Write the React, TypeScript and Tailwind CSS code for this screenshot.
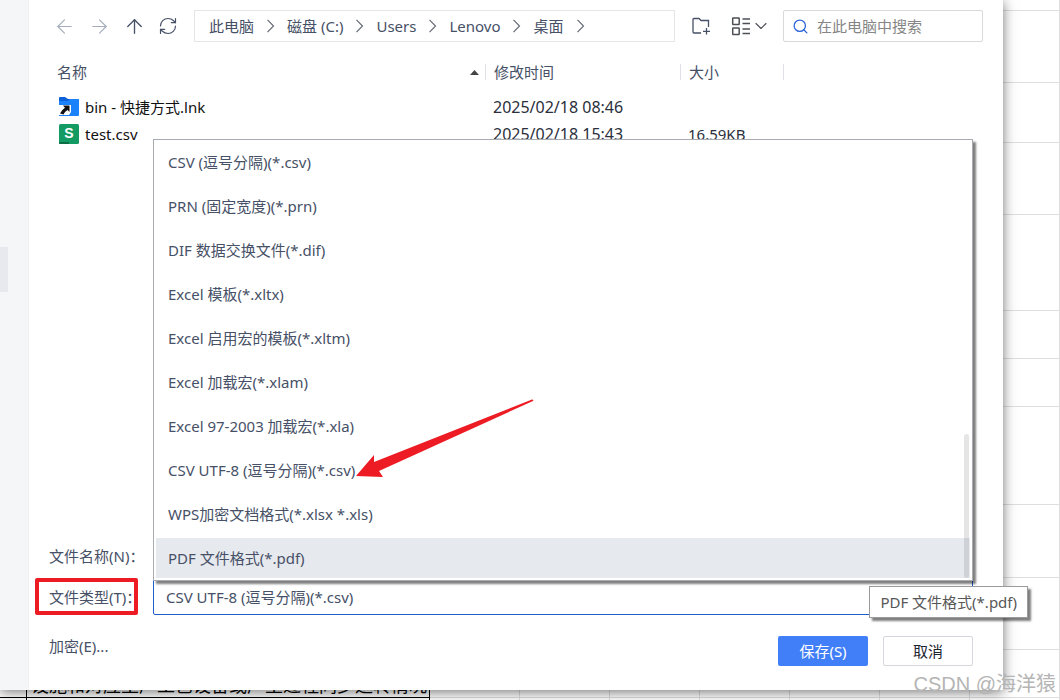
import React, { useState } from 'react'
import { ArrowLeft, ArrowRight, ArrowUp, ChevronDown, RefreshCw, Search } from 'lucide-react'

const fileTypes = [
  'CSV (逗号分隔)(*.csv)',
  'PRN (固定宽度)(*.prn)',
  'DIF 数据交换文件(*.dif)',
  'Excel 模板(*.xltx)',
  'Excel 启用宏的模板(*.xltm)',
  'Excel 加载宏(*.xlam)',
  'Excel 97-2003 加载宏(*.xla)',
  'CSV UTF-8 (逗号分隔)(*.csv)',
  'WPS加密文档格式(*.xlsx *.xls)',
  'PDF 文件格式(*.pdf)',
]

const crumbs = ['此电脑', '磁盘 (C:)', 'Users', 'Lenovo', '桌面']

export default function App() {
  const [hovered, setHovered] = useState('PDF 文件格式(*.pdf)')

  return (
    <div className="flex min-h-screen flex-col overflow-hidden bg-white font-['Noto_Sans','Noto_Sans_CJK_SC',sans-serif] text-[15px] leading-5 text-[#465066]">
      <div className="flex flex-1">
        <div className="relative z-10 flex min-w-0 flex-1 bg-white shadow-[0_2px_12px_rgba(0,0,0,0.55)]">
          <Sidebar />
          <main className="flex min-w-0 flex-1 flex-col">
            <Toolbar />
            <FileTable />
            <SaveForm hovered={hovered} setHovered={setHovered} />
          </main>
        </div>
        <SheetRows />
      </div>
      <SheetFooter />
    </div>
  )
}

const Sidebar = () => {
  return (
    <aside className="w-[29px] shrink-0 border-r border-[#f0f1f3] bg-[#f5f6f8] pt-[247px]">
      <div className="h-[45px] w-2 bg-[#e7e9ee]"></div>
    </aside>
  )
}

const Toolbar = () => {
  return (
    <div className="flex items-center pt-[10px] pr-5 pl-6">
      <div className="flex items-center gap-3">
        <button aria-label="后退" className="text-[#a5adbd]">
          <ArrowLeft size={23} strokeWidth={1.2} />
        </button>
        <button aria-label="前进" className="text-[#a5adbd]">
          <ArrowRight size={23} strokeWidth={1.2} />
        </button>
        <button aria-label="上移">
          <ArrowUp size={23} strokeWidth={1.4} />
        </button>
        <button aria-label="刷新">
          <RefreshCw size={20} strokeWidth={1.4} />
        </button>
      </div>
      <nav className="ml-4 flex h-8 min-w-0 flex-1 items-center border border-[#e6e6e8] pl-[14px]">
        {crumbs.map((c) => (
          <div key={c} className="flex items-center whitespace-nowrap">
            <a href="#">{c}</a>
            <CrumbArrow />
          </div>
        ))}
      </nav>
      <button aria-label="新建文件夹" className="ml-4">
        <NewFolderIcon />
      </button>
      <button aria-label="视图" className="ml-5 flex items-center text-[#4d4f55]">
        <ViewIcon />
        <ChevronDown size={20} strokeWidth={1.3} />
      </button>
      <label className="ml-3 flex h-8 w-[200px] items-center gap-2 rounded-[2px] border border-[#d9d9dc] pl-2">
        <Search size={17} strokeWidth={1.8} className="shrink-0 text-[#2a62d9]" />
        <input
          aria-label="搜索"
          placeholder="在此电脑中搜索"
          className="w-full min-w-0 outline-none placeholder:text-[#858585]"
        />
      </label>
    </div>
  )
}

const FileTable = () => {
  return (
    <table className="mt-5 ml-6 w-[750px] table-fixed border-collapse text-left">
      <thead>
        <tr className="h-5">
          <th className="w-[432px] pl-1 font-normal">
            <div className="flex items-center justify-between pr-[6px]">
              名称
              <svg width="9" height="5" viewBox="0 0 9 5" fill="#444">
                <path d="M4.5 0 9 5H0Z" />
              </svg>
            </div>
          </th>
          <HeadCell name="修改时间" cname="w-[195px]" />
          <HeadCell name="大小" cname="w-[103px]" />
          <HeadCell name="" cname="w-5" />
        </tr>
      </thead>
      <tbody className="text-[#111]">
        <tr>
          <td className="pt-[11px] pl-[6px]">
            <div className="flex h-[27px] items-center gap-[6px]">
              <LinkFolderIcon />
              bin - 快捷方式.lnk
            </div>
          </td>
          <td className="pt-[11px] pl-2 text-base text-[#2a2f3b]">2025/02/18 08:46</td>
          <td></td>
          <td></td>
        </tr>
        <tr>
          <td className="pl-[6px]">
            <div className="flex h-[27px] items-center gap-[6px]">
              <SheetIcon />
              test.csv
            </div>
          </td>
          <td className="pl-2 text-base text-[#2a2f3b]">2025/02/18 15:43</td>
          <td className="pl-2 text-[#2a2f3b]">16.59KB</td>
          <td></td>
        </tr>
      </tbody>
    </table>
  )
}

const HeadCell = ({ name, cname }: any) => {
  return (
    <th className={`font-normal ${cname}`}>
      <div className="flex items-center gap-2">
        <span className="h-4 w-px bg-[#dfe1e6]"></span>
        {name}
      </div>
    </th>
  )
}

const SaveForm = ({ hovered, setHovered }: any) => {
  return (
    <form className="mt-auto pr-[30px] pl-[6px]" onSubmit={(e) => e.preventDefault()}>
      <div className="flex h-[38px] items-center">
        <label htmlFor="fileName" className="w-[118px] shrink-0 pl-[14px]">文件名称(N)：</label>
        <input id="fileName" className="h-8 min-w-0 flex-1 border border-[#d9dbe0] px-3 outline-none" />
      </div>
      <div className="relative flex items-center pt-[3px]">
        <label
          htmlFor="fileType"
          className="mr-[15px] flex h-[37px] w-[103px] shrink-0 items-center rounded-[2px] border-4 border-[#ed1c24] pl-[10px] whitespace-nowrap"
        >
          文件类型(T)：
        </label>
        <select
          id="fileType"
          className="h-9 min-w-0 flex-1 appearance-none rounded-[2px] border border-[#1f5fcb] bg-white px-3 outline-none"
        >
          <option>CSV UTF-8 (逗号分隔)(*.csv)</option>
        </select>
        <FileTypeList hovered={hovered} setHovered={setHovered} />
        <div className="absolute top-[11px] -right-[55px] z-20 flex h-8 items-center border border-[#9b9b9b] bg-white px-[10px] whitespace-nowrap text-[#575757] shadow-[3px_3px_2px_rgba(0,0,0,0.5)]">
          {hovered}
        </div>
      </div>
      <div className="flex h-[75px] items-start gap-[15px] pt-[21px]">
        <a href="#" className="mr-auto pl-[14px]">加密(E)...</a>
        <button type="submit" className="h-[30px] w-[90px] rounded-[2px] bg-[#417ff9] text-white">保存(S)</button>
        <button type="button" className="h-[30px] w-[90px] rounded-[2px] border border-[#d5d7dc] text-[#1e2430]">取消</button>
      </div>
    </form>
  )
}

const FileTypeList = ({ hovered, setHovered }: any) => {
  return (
    <div className="absolute right-0 bottom-[34px] left-[118px] z-10 border border-[#a9abb3] bg-white p-[2px] shadow-[3px_3px_2px_rgba(0,0,0,0.5)]">
      <ul className="flex flex-col gap-1">
        {fileTypes.map((t) => (
          <li
            key={t}
            onMouseEnter={() => setHovered(t)}
            className={`flex h-10 items-center pl-3 ${hovered === t ? 'bg-[#e6e9ee]' : ''}`}
          >
            {t}
          </li>
        ))}
      </ul>
      <div className="absolute right-[3px] bottom-[2px] h-[144px] w-[5px] rounded-full bg-black/10"></div>
      <svg className="absolute top-[259px] left-[202px]" width="178" height="80" viewBox="0 0 178 80" fill="#ed1c24">
        <path d="M0 77 18 56 18 63 176 .5Q178 .5 177 2L23 72 27 78Z" />
      </svg>
    </div>
  )
}

const SheetRows = () => {
  return (
    <div className="flex w-[57px] shrink-0 flex-col border-r border-[#dedede]">
      <div className="h-[11px] border-b border-[#dedede]"></div>
      <div className="h-[72px] border-b border-[#dedede]"></div>
      <div className="h-[60px] border-b border-[#dedede]"></div>
      <div className="h-[72px] border-b border-[#dedede]"></div>
      <div className="h-[96px] border-b border-[#dedede]"></div>
      <div className="h-[48px] border-b border-[#dedede]"></div>
      <div className="h-[48px] border-b border-[#dedede]"></div>
      <div className="h-[98px] border-b border-[#dedede]"></div>
      <div className="h-[73px] border-b border-[#dedede]"></div>
      <div className="h-[72px] border-b border-[#dedede]"></div>
    </div>
  )
}

const SheetFooter = () => {
  return (
    <div className="relative flex h-[10px] text-black">
      <div className="w-[27px] shrink-0 border-r border-black">
        <div className="h-2 border-b border-black"></div>
      </div>
      <div className="w-[403px] shrink-0 border-r border-black">
        {/* the dialog covers the upper part of this row */}
        <div className="flex h-2 items-end border-b border-black pl-1 text-[18px] leading-6 whitespace-nowrap">
          设施和对应生产工艺设备或产生过程同步运转情况
        </div>
      </div>
      {[1, 2, 3, 4, 5, 6, 7].map((n) => (
        <div key={n} className="w-[90px] shrink-0 border-r border-[#dedede]">
          <div className="h-2 border-b border-[#dedede]"></div>
        </div>
      ))}
      <div className="absolute right-1 bottom-1 z-20 font-['Liberation_Sans','Noto_Sans_CJK_SC',sans-serif] text-[20px] leading-6 text-[#b5b5b5]">
        CSDN @海洋猿
      </div>
    </div>
  )
}

const CrumbArrow = () => {
  return (
    <svg className="mx-3" width="9" height="14" viewBox="0 0 9 14" fill="none" stroke="#666b76" strokeWidth="1.2">
      <path d="M1.5 .8 7.5 7 1.5 13.2" />
    </svg>
  )
}

const NewFolderIcon = () => {
  return (
    <svg width="20" height="20" viewBox="0 0 20 20" fill="none" stroke="currentColor" strokeWidth="1.3">
      <path d="M10 17H3a1 1 0 0 1-1-1V3.5a1 1 0 0 1 1-1h5l2 2h7.5V11M15.5 12v6.5M12 15.3h7" />
    </svg>
  )
}

const ViewIcon = () => {
  return (
    <svg width="20" height="20" viewBox="0 0 20 20" fill="none" stroke="currentColor" strokeWidth="1.5">
      <rect x="1.7" y="2" width="6.5" height="6.5" rx=".5" />
      <rect x="1.7" y="12" width="6.5" height="6.5" rx=".5" />
      <path d="M11.5 3H19M11.5 7.5H19M11.5 13H19M11.5 17.5H19" />
    </svg>
  )
}

const LinkFolderIcon = () => {
  return (
    <svg width="20" height="19" viewBox="0 0 20 19">
      <path d="M0 1a1 1 0 0 1 1-1h5l3 2h10a1 1 0 0 1 1 1v5H0Z" fill="#0b62d8" />
      <path d="M0 4h9l2-2h8a1 1 0 0 1 1 1v15a1 1 0 0 1-1 1H0Z" fill="#1a82fb" />
      <path d="M0 8h12v7l-2 3H0Z" fill="#fff" />
      <path d="M10.5 8.5v6.5l-2-2Q5.5 14.5 4.5 17.5L1 16.5Q2.5 13 6 10.7L4 8.5Z" fill="#111" />
    </svg>
  )
}

const SheetIcon = () => {
  return (
    <svg width="20" height="20" viewBox="0 0 20 20">
      <rect width="20" height="20" rx="1.5" fill="#149b64" />
      <path d="M0 18h10v2H1.5A1.5 1.5 0 0 1 0 18Z" fill="#0c6e47" />
      <text x="10" y="14" textAnchor="middle" fontSize="14" fontWeight="700" fill="#fff" fontFamily="Liberation Sans, sans-serif">S</text>
    </svg>
  )
}
